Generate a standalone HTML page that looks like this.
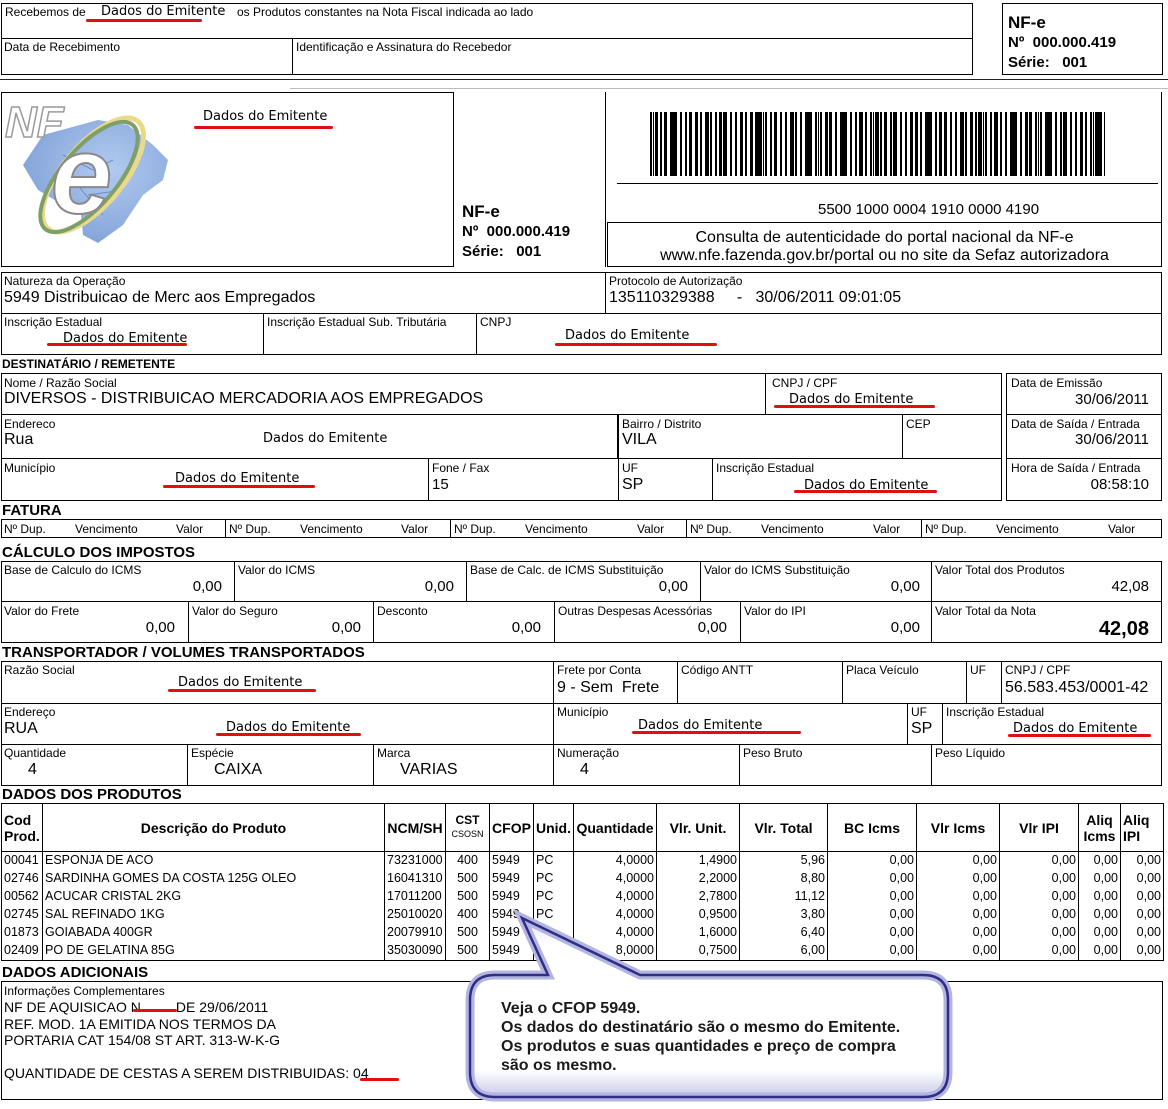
<!DOCTYPE html>
<html><head><meta charset="utf-8">
<style>
*{margin:0;padding:0;box-sizing:border-box}
body{width:1168px;height:1109px;background:#fff;position:relative;overflow:hidden;font-family:"Liberation Sans",Arial,sans-serif;color:#000}
.b{position:absolute;border:1px solid #000}
.t{position:absolute;font-size:12px;line-height:14px;white-space:nowrap}
.v{position:absolute;font-size:16px;line-height:18px;white-space:nowrap}
.r{text-align:right}
.h{position:absolute;font-size:15px;line-height:16px;font-weight:bold;white-space:nowrap}
.d{position:absolute;font-family:"DejaVu Sans",sans-serif;font-size:13px;line-height:15px;white-space:nowrap}
.u{position:absolute;height:3px;background:#e01010;border-radius:2px}
table{position:absolute;left:1px;top:803px;width:1162px;height:158px;border-collapse:collapse;table-layout:fixed}
th,td{border-left:1px solid #000;border-right:1px solid #000;padding:0 2px;white-space:nowrap;overflow:hidden}
th{border:1px solid #000;font-size:14px;font-weight:bold;height:48px;line-height:16px}
td{font-size:12.5px;line-height:17.6px;height:17.6px}
table{border:1px solid #000}
</style></head><body>

<!-- top canhoto -->
<div class="b" style="left:1px;top:3px;width:972px;height:36px"></div>
<div class="b" style="left:1px;top:38px;width:292px;height:37px"></div>
<div class="b" style="left:292px;top:38px;width:681px;height:37px"></div>
<div class="b" style="left:1002px;top:3px;width:161px;height:72px"></div>
<div class="t" style="left:5px;top:5px">Recebemos de</div>
<div class="d" style="left:101px;top:4px">Dados do Emitente</div>
<div class="u" style="left:86px;top:19px;width:116px"></div>
<div class="t" style="left:237px;top:5px">os Produtos constantes na Nota Fiscal indicada ao lado</div>
<div class="t" style="left:4px;top:40px">Data de Recebimento</div>
<div class="t" style="left:296px;top:40px">Identificação e Assinatura do Recebedor</div>
<div class="h" style="left:1008px;top:15px;font-size:17px">NF-e</div>
<div class="h" style="left:1008px;top:35px">Nº &nbsp;000.000.419</div>
<div class="h" style="left:1008px;top:55px">Série: &nbsp;&nbsp;001</div>
<div style="position:absolute;left:0;top:79px;width:1168px;height:1px;background:#222"></div>
<div style="position:absolute;left:290px;top:88px;width:878px;height:1px;background:#bbb"></div>

<!-- header -->
<div class="b" style="left:1px;top:92px;width:453px;height:175px"></div>
<div class="b" style="left:453px;top:92px;width:153px;height:175px;border-top:none;border-bottom:none"></div>
<div style="position:absolute;left:1161px;top:92px;width:1px;height:175px;background:#000"></div>
<svg style="position:absolute;left:3px;top:95px" width="175" height="155" viewBox="0 0 175 155">
<defs><radialGradient id="bl" cx="0.6" cy="0.4" r="0.7"><stop offset="0" stop-color="#a9c4ee"/><stop offset="1" stop-color="#6f94d2"/></radialGradient></defs>
<path d="M40 40 L95 25 L125 30 L150 50 L165 65 L160 85 L140 100 L120 130 L95 148 L80 140 L78 120 L60 110 L35 95 L20 70 Z" fill="url(#bl)" opacity="0.9"/>
<path d="M60 60 L90 75 L110 65 M85 100 L120 95 M70 85 L100 120" stroke="#5a7dbf" stroke-width="0.7" fill="none"/>
<ellipse cx="90" cy="80" rx="30" ry="70" transform="rotate(40 90 80)" fill="none" stroke="#e8da8a" stroke-width="5"/>
<ellipse cx="86" cy="82" rx="28" ry="68" transform="rotate(40 86 82)" fill="none" stroke="#7f9f68" stroke-width="4"/>
<text x="48" y="118" font-family="Liberation Sans" font-style="italic" font-weight="bold" font-size="110" fill="#fff" stroke="#8a8a8a" stroke-width="2">e</text>
<text x="2" y="42" font-family="Liberation Sans" font-style="italic" font-weight="bold" font-size="44" fill="#fff" stroke="#9a9a9a" stroke-width="1.5">NF</text>
</svg>
<div class="d" style="left:203px;top:109px">Dados do Emitente</div>
<div class="u" style="left:194px;top:126px;width:139px"></div>
<div class="h" style="left:462px;top:204px;font-size:17px">NF-e</div>
<div class="h" style="left:462px;top:224px">Nº &nbsp;000.000.419</div>
<div class="h" style="left:462px;top:244px">Série: &nbsp;&nbsp;001</div>
<div style="position:absolute;left:650px;top:112px;width:455px;height:64px;background:
repeating-linear-gradient(90deg,#000 0 2px,transparent 2px 5px),
repeating-linear-gradient(90deg,transparent 0 3px,#000 3px 4px,transparent 4px 11px),
repeating-linear-gradient(90deg,transparent 0 5px,#000 5px 8px,transparent 8px 17px)"></div>
<div style="position:absolute;left:617px;top:183px;width:541px;height:1px;background:#000"></div>
<div class="v" style="left:818px;top:201px;font-size:15px">5500 1000 0004 1910 0000 4190</div>
<div class="b" style="left:607px;top:222px;width:555px;height:45px"></div>
<div class="v" style="left:607px;top:229px;width:555px;text-align:center">Consulta de autenticidade do portal nacional da NF-e</div>
<div class="v" style="left:607px;top:247px;width:555px;text-align:center">www.nfe.fazenda.gov.br/portal ou no site da Sefaz autorizadora</div>

<div class="b" style="left:1px;top:272px;width:605px;height:42px"></div>
<div class="b" style="left:605px;top:272px;width:557px;height:42px"></div>
<div class="t" style="left:4px;top:274px">Natureza da Operação</div>
<div class="v" style="left:4px;top:289px">5949 Distribuicao de Merc aos Empregados</div>
<div class="t" style="left:609px;top:274px">Protocolo de Autorização</div>
<div class="v" style="left:609px;top:289px">135110329388 &nbsp;&nbsp;&nbsp; - &nbsp;&nbsp;30/06/2011 09:01:05</div>
<div class="b" style="left:1px;top:313px;width:263px;height:42px"></div>
<div class="b" style="left:263px;top:313px;width:214px;height:42px"></div>
<div class="b" style="left:476px;top:313px;width:686px;height:42px"></div>
<div class="t" style="left:4px;top:315px">Inscrição Estadual</div>
<div class="d" style="left:63px;top:331px">Dados do Emitente</div>
<div class="u" style="left:47px;top:343px;width:140px"></div>
<div class="t" style="left:267px;top:315px">Inscrição Estadual Sub. Tributária</div>
<div class="t" style="left:480px;top:315px">CNPJ</div>
<div class="d" style="left:565px;top:328px">Dados do Emitente</div>
<div class="u" style="left:555px;top:343px;width:162px"></div>

<!-- destinatario -->
<div class="t" style="left:2px;top:357px;font-weight:bold">DESTINATÁRIO / REMETENTE</div>
<div class="b" style="left:1px;top:373px;width:765px;height:42px"></div>
<div class="b" style="left:765px;top:373px;width:237px;height:42px"></div>
<div class="b" style="left:1px;top:414px;width:618px;height:45px"></div>
<div class="b" style="left:617px;top:414px;width:286px;height:45px"></div>
<div class="b" style="left:902px;top:414px;width:100px;height:45px"></div>
<div class="b" style="left:1px;top:458px;width:428px;height:43px"></div>
<div class="b" style="left:428px;top:458px;width:191px;height:43px"></div>
<div class="b" style="left:618px;top:458px;width:95px;height:43px"></div>
<div class="b" style="left:712px;top:458px;width:290px;height:43px"></div>
<div class="b" style="left:1006px;top:373px;width:156px;height:42px"></div>
<div class="b" style="left:1006px;top:414px;width:156px;height:45px"></div>
<div class="b" style="left:1006px;top:458px;width:156px;height:43px"></div>
<div class="t" style="left:4px;top:376px">Nome / Razão Social</div>
<div class="v" style="left:4px;top:390px">DIVERSOS - DISTRIBUICAO MERCADORIA AOS EMPREGADOS</div>
<div class="t" style="left:772px;top:376px">CNPJ / CPF</div>
<div class="d" style="left:789px;top:392px">Dados do Emitente</div>
<div class="u" style="left:774px;top:405px;width:161px"></div>
<div class="t" style="left:1011px;top:376px">Data de Emissão</div>
<div class="v r" style="left:1011px;top:391px;width:138px;font-size:15px">30/06/2011</div>
<div class="t" style="left:4px;top:417px">Endereco</div>
<div class="v" style="left:4px;top:431px">Rua</div>
<div class="d" style="left:263px;top:431px">Dados do Emitente</div>
<div class="t" style="left:622px;top:417px">Bairro / Distrito</div>
<div class="v" style="left:622px;top:431px">VILA</div>
<div class="t" style="left:906px;top:417px">CEP</div>
<div class="t" style="left:1011px;top:417px">Data de Saída / Entrada</div>
<div class="v r" style="left:1011px;top:431px;width:138px;font-size:15px">30/06/2011</div>
<div class="t" style="left:4px;top:461px">Município</div>
<div class="d" style="left:175px;top:471px">Dados do Emitente</div>
<div class="u" style="left:163px;top:485px;width:152px"></div>
<div class="t" style="left:432px;top:461px">Fone / Fax</div>
<div class="v" style="left:432px;top:476px;font-size:15px">15</div>
<div class="t" style="left:622px;top:461px">UF</div>
<div class="v" style="left:622px;top:476px">SP</div>
<div class="t" style="left:716px;top:461px">Inscrição Estadual</div>
<div class="d" style="left:804px;top:478px">Dados do Emitente</div>
<div class="u" style="left:794px;top:490px;width:143px"></div>
<div class="t" style="left:1011px;top:461px">Hora de Saída / Entrada</div>
<div class="v r" style="left:1011px;top:476px;width:138px;font-size:15px">08:58:10</div>

<!-- fatura -->
<div class="h" style="left:2px;top:503px">FATURA</div>
<div class="b" style="left:1px;top:519px;width:225px;height:19px"></div>
<div class="b" style="left:225px;top:519px;width:226px;height:19px"></div>
<div class="b" style="left:450px;top:519px;width:237px;height:19px"></div>
<div class="b" style="left:686px;top:519px;width:236px;height:19px"></div>
<div class="b" style="left:921px;top:519px;width:241px;height:19px"></div>
<div class="t" style="left:4px;top:522px">Nº Dup.</div><div class="t" style="left:75px;top:522px">Vencimento</div><div class="t" style="left:176px;top:522px">Valor</div>
<div class="t" style="left:229px;top:522px">Nº Dup.</div><div class="t" style="left:300px;top:522px">Vencimento</div><div class="t" style="left:401px;top:522px">Valor</div>
<div class="t" style="left:454px;top:522px">Nº Dup.</div><div class="t" style="left:525px;top:522px">Vencimento</div><div class="t" style="left:637px;top:522px">Valor</div>
<div class="t" style="left:690px;top:522px">Nº Dup.</div><div class="t" style="left:761px;top:522px">Vencimento</div><div class="t" style="left:873px;top:522px">Valor</div>
<div class="t" style="left:925px;top:522px">Nº Dup.</div><div class="t" style="left:996px;top:522px">Vencimento</div><div class="t" style="left:1108px;top:522px">Valor</div>

<!-- impostos -->
<div class="h" style="left:2px;top:545px">CÁLCULO DOS IMPOSTOS</div>
<div class="b" style="left:1px;top:561px;width:234px;height:41px"></div>
<div class="b" style="left:234px;top:561px;width:233px;height:41px"></div>
<div class="b" style="left:466px;top:561px;width:235px;height:41px"></div>
<div class="b" style="left:700px;top:561px;width:232px;height:41px"></div>
<div class="b" style="left:931px;top:561px;width:231px;height:41px"></div>
<div class="b" style="left:1px;top:601px;width:188px;height:42px"></div>
<div class="b" style="left:188px;top:601px;width:186px;height:42px"></div>
<div class="b" style="left:373px;top:601px;width:182px;height:42px"></div>
<div class="b" style="left:554px;top:601px;width:187px;height:42px"></div>
<div class="b" style="left:740px;top:601px;width:192px;height:42px"></div>
<div class="b" style="left:931px;top:601px;width:231px;height:42px"></div>
<div class="t" style="left:4px;top:563px">Base de Calculo do ICMS</div>
<div class="t" style="left:238px;top:563px">Valor do ICMS</div>
<div class="t" style="left:470px;top:563px">Base de Calc. de ICMS Substituição</div>
<div class="t" style="left:704px;top:563px">Valor do ICMS Substituição</div>
<div class="t" style="left:935px;top:563px">Valor Total dos Produtos</div>
<div class="v r" style="left:100px;top:578px;width:122px;font-size:15px">0,00</div>
<div class="v r" style="left:300px;top:578px;width:154px;font-size:15px">0,00</div>
<div class="v r" style="left:500px;top:578px;width:188px;font-size:15px">0,00</div>
<div class="v r" style="left:750px;top:578px;width:170px;font-size:15px">0,00</div>
<div class="v r" style="left:1000px;top:578px;width:149px;font-size:15px">42,08</div>
<div class="t" style="left:4px;top:604px">Valor do Frete</div>
<div class="t" style="left:192px;top:604px">Valor do Seguro</div>
<div class="t" style="left:377px;top:604px">Desconto</div>
<div class="t" style="left:558px;top:604px">Outras Despesas Acessórias</div>
<div class="t" style="left:744px;top:604px">Valor do IPI</div>
<div class="t" style="left:935px;top:604px">Valor Total da Nota</div>
<div class="v r" style="left:50px;top:619px;width:125px;font-size:15px">0,00</div>
<div class="v r" style="left:200px;top:619px;width:161px;font-size:15px">0,00</div>
<div class="v r" style="left:400px;top:619px;width:141px;font-size:15px">0,00</div>
<div class="v r" style="left:600px;top:619px;width:127px;font-size:15px">0,00</div>
<div class="v r" style="left:800px;top:619px;width:120px;font-size:15px">0,00</div>
<div class="v r" style="left:1000px;top:618px;width:149px;font-size:20px;line-height:22px;font-weight:bold">42,08</div>

<!-- transportador -->
<div class="h" style="left:2px;top:645px">TRANSPORTADOR / VOLUMES TRANSPORTADOS</div>
<div class="b" style="left:1px;top:661px;width:553px;height:43px"></div>
<div class="b" style="left:553px;top:661px;width:125px;height:43px"></div>
<div class="b" style="left:677px;top:661px;width:166px;height:43px"></div>
<div class="b" style="left:842px;top:661px;width:125px;height:43px"></div>
<div class="b" style="left:966px;top:661px;width:36px;height:43px"></div>
<div class="b" style="left:1001px;top:661px;width:161px;height:43px"></div>
<div class="b" style="left:1px;top:703px;width:553px;height:42px"></div>
<div class="b" style="left:553px;top:703px;width:355px;height:42px"></div>
<div class="b" style="left:907px;top:703px;width:36px;height:42px"></div>
<div class="b" style="left:942px;top:703px;width:220px;height:42px"></div>
<div class="b" style="left:1px;top:744px;width:187px;height:42px"></div>
<div class="b" style="left:187px;top:744px;width:187px;height:42px"></div>
<div class="b" style="left:373px;top:744px;width:181px;height:42px"></div>
<div class="b" style="left:553px;top:744px;width:187px;height:42px"></div>
<div class="b" style="left:739px;top:744px;width:193px;height:42px"></div>
<div class="b" style="left:931px;top:744px;width:231px;height:42px"></div>
<div class="t" style="left:4px;top:663px">Razão Social</div>
<div class="d" style="left:178px;top:675px">Dados do Emitente</div>
<div class="u" style="left:168px;top:689px;width:148px"></div>
<div class="t" style="left:557px;top:663px">Frete por Conta</div>
<div class="v" style="left:557px;top:679px">9 - Sem &nbsp;Frete</div>
<div class="t" style="left:681px;top:663px">Código ANTT</div>
<div class="t" style="left:846px;top:663px">Placa Veículo</div>
<div class="t" style="left:970px;top:663px">UF</div>
<div class="t" style="left:1005px;top:663px">CNPJ / CPF</div>
<div class="v" style="left:1005px;top:679px">56.583.453/0001-42</div>
<div class="t" style="left:4px;top:705px">Endereço</div>
<div class="v" style="left:4px;top:720px">RUA</div>
<div class="d" style="left:226px;top:720px">Dados do Emitente</div>
<div class="u" style="left:216px;top:733px;width:145px"></div>
<div class="t" style="left:557px;top:705px">Município</div>
<div class="d" style="left:638px;top:718px">Dados do Emitente</div>
<div class="u" style="left:632px;top:731px;width:169px"></div>
<div class="t" style="left:911px;top:705px">UF</div>
<div class="v" style="left:911px;top:720px">SP</div>
<div class="t" style="left:946px;top:705px">Inscrição Estadual</div>
<div class="d" style="left:1013px;top:721px">Dados do Emitente</div>
<div class="u" style="left:1008px;top:734px;width:143px"></div>
<div class="t" style="left:4px;top:746px">Quantidade</div>
<div class="v" style="left:28px;top:761px">4</div>
<div class="t" style="left:191px;top:746px">Espécie</div>
<div class="v" style="left:214px;top:761px">CAIXA</div>
<div class="t" style="left:377px;top:746px">Marca</div>
<div class="v" style="left:400px;top:761px">VARIAS</div>
<div class="t" style="left:557px;top:746px">Numeração</div>
<div class="v" style="left:580px;top:761px">4</div>
<div class="t" style="left:743px;top:746px">Peso Bruto</div>
<div class="t" style="left:935px;top:746px">Peso Líquido</div>

<!-- produtos -->
<div class="h" style="left:2px;top:787px">DADOS DOS PRODUTOS</div>
<table>
<colgroup><col style="width:41px"><col style="width:342px"><col style="width:61px"><col style="width:44px"><col style="width:44px"><col style="width:40px"><col style="width:83px"><col style="width:83px"><col style="width:88px"><col style="width:89px"><col style="width:83px"><col style="width:79px"><col style="width:42px"><col style="width:43px"></colgroup>
<thead><tr>
<th style="text-align:left">Cod<br>Prod.</th><th>Descrição do Produto</th><th>NCM/SH</th><th style="font-size:12px;line-height:13px">CST<br><span style="font-size:9px;font-weight:normal">CSOSN</span></th><th style="padding:0 1px">CFOP</th><th style="padding:0 1px">Unid.</th><th style="padding:0 1px">Quantidade</th><th>Vlr. Unit.</th><th>Vlr. Total</th><th>BC Icms</th><th>Vlr Icms</th><th>Vlr IPI</th><th style="padding:0 1px">Aliq<br>Icms</th><th style="text-align:left">Aliq<br>IPI</th>
</tr></thead>
<tbody>
<tr><td>00041</td><td>ESPONJA DE ACO</td><td>73231000</td><td style="text-align:center">400</td><td>5949</td><td>PC</td><td class="r">4,0000</td><td class="r">1,4900</td><td class="r">5,96</td><td class="r">0,00</td><td class="r">0,00</td><td class="r">0,00</td><td class="r">0,00</td><td class="r">0,00</td></tr>
<tr><td>02746</td><td>SARDINHA GOMES DA COSTA 125G OLEO</td><td>16041310</td><td style="text-align:center">500</td><td>5949</td><td>PC</td><td class="r">4,0000</td><td class="r">2,2000</td><td class="r">8,80</td><td class="r">0,00</td><td class="r">0,00</td><td class="r">0,00</td><td class="r">0,00</td><td class="r">0,00</td></tr>
<tr><td>00562</td><td>ACUCAR CRISTAL 2KG</td><td>17011200</td><td style="text-align:center">500</td><td>5949</td><td>PC</td><td class="r">4,0000</td><td class="r">2,7800</td><td class="r">11,12</td><td class="r">0,00</td><td class="r">0,00</td><td class="r">0,00</td><td class="r">0,00</td><td class="r">0,00</td></tr>
<tr><td>02745</td><td>SAL REFINADO 1KG</td><td>25010020</td><td style="text-align:center">400</td><td>5949</td><td>PC</td><td class="r">4,0000</td><td class="r">0,9500</td><td class="r">3,80</td><td class="r">0,00</td><td class="r">0,00</td><td class="r">0,00</td><td class="r">0,00</td><td class="r">0,00</td></tr>
<tr><td>01873</td><td>GOIABADA 400GR</td><td>20079910</td><td style="text-align:center">500</td><td>5949</td><td>PC</td><td class="r">4,0000</td><td class="r">1,6000</td><td class="r">6,40</td><td class="r">0,00</td><td class="r">0,00</td><td class="r">0,00</td><td class="r">0,00</td><td class="r">0,00</td></tr>
<tr><td>02409</td><td>PO DE GELATINA 85G</td><td>35030090</td><td style="text-align:center">500</td><td>5949</td><td>PC</td><td class="r">8,0000</td><td class="r">0,7500</td><td class="r">6,00</td><td class="r">0,00</td><td class="r">0,00</td><td class="r">0,00</td><td class="r">0,00</td><td class="r">0,00</td></tr>
</tbody></table>

<!-- adicionais -->
<div class="h" style="left:2px;top:965px">DADOS ADICIONAIS</div>
<div class="b" style="left:1px;top:981px;width:1162px;height:119px"></div>
<div class="t" style="left:4px;top:984px">Informações Complementares</div>
<div class="v" style="left:4px;top:998px;font-size:14px">NF DE AQUISICAO N &nbsp;&nbsp;&nbsp;&nbsp;&nbsp;&nbsp;&nbsp;&nbsp;DE 29/06/2011</div>
<div class="u" style="left:133px;top:1009px;width:44px"></div>
<div class="v" style="left:4px;top:1015px;font-size:14px">REF. MOD. 1A EMITIDA NOS TERMOS DA</div>
<div class="v" style="left:4px;top:1031px;font-size:14px">PORTARIA CAT 154/08 ST ART. 313-W-K-G</div>
<div class="v" style="left:4px;top:1064px;font-size:14px">QUANTIDADE DE CESTAS A SEREM DISTRIBUIDAS: 04</div>
<div class="u" style="left:360px;top:1078px;width:39px"></div>

<!-- callout -->
<svg style="position:absolute;left:0;top:0" width="1168" height="1109">
<defs>
<linearGradient id="cg" x1="0" y1="0" x2="0" y2="1"><stop offset="0" stop-color="#e6e6f6"/><stop offset="0.15" stop-color="#fff"/><stop offset="0.85" stop-color="#fff"/><stop offset="1" stop-color="#c8c8ea"/></linearGradient>
</defs>
<path d="M495 975 L548 975 L522 918 L640 975 L923 975 Q948 975 948 1000 L948 1072 Q948 1097 923 1097 L495 1097 Q470 1097 470 1072 L470 1000 Q470 975 495 975 Z" fill="url(#cg)" stroke="#b4b4e0" stroke-width="9"/>
<path d="M495 975 L548 975 L522 918 L640 975 L923 975 Q948 975 948 1000 L948 1072 Q948 1097 923 1097 L495 1097 Q470 1097 470 1072 L470 1000 Q470 975 495 975 Z" fill="none" stroke="#2e2e86" stroke-width="2.5"/>
<g font-family="Liberation Sans, Arial, sans-serif" font-weight="bold" font-size="16" fill="#1a1a1a">
<text x="501" y="1013">Veja o CFOP 5949.</text>
<text x="501" y="1032">Os dados do destinatário são o mesmo do Emitente.</text>
<text x="501" y="1051">Os produtos e suas quantidades e preço de compra</text>
<text x="501" y="1070">são os mesmo.</text>
</g>
</svg>
</body></html>
